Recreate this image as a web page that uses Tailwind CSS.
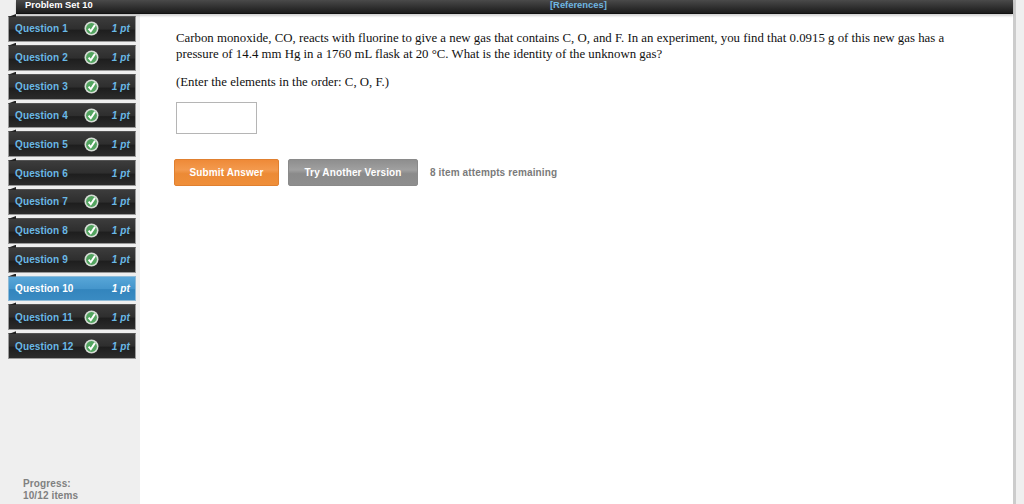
<!DOCTYPE html>
<html lang="en">
<head>
<meta charset="UTF-8">
<title>Problem Set 10</title>
<script src="https://cdn.jsdelivr.net/npm/@tailwindcss/browser@4"></script>
</head>
<body class="bg-white font-['Liberation_Sans',Arial,sans-serif] tracking-[0.12px]">
<div class="h-screen flex flex-col overflow-hidden">

  <!-- Top bar -->
  <div class="flex h-[14px] shrink-0">
    <div class="w-[16px] bg-[#efefef]"></div>
    <div class="w-[997px] flex items-start bg-gradient-to-b from-[#4a4a4a] to-[#1c1c1c] border-b border-[#111] shadow-[0_2px_2px_rgba(0,0,0,0.18)] relative">
      <span class="ml-[9px] text-[9.4px] leading-[9px] font-bold tracking-normal text-white w-[525px]">Problem Set 10</span>
      <a class="text-[9.4px] leading-[9px] font-bold tracking-normal text-[#6fb7e0]">[References]</a>
    </div>
    <div class="flex-1 border-l-[3px] border-[#ccc] bg-[#efefef]"></div>
  </div>

  <div class="flex flex-1 min-h-0">
    <!-- Sidebar -->
    <aside class="w-[140px] shrink-0 bg-[#efefef] flex flex-col pt-[2px] pl-[8px] pr-[4px]">
      <div class="relative h-[25.85px] mb-[3px] flex items-center pl-[7px] pr-[5px] border border-[#9a9a9a] border-t-[#555] bg-[linear-gradient(#3c3c3c,#2e2e2e_50%,#1e1e1e_55%,#2b2b2b)]">
        <span class="absolute -left-px -top-[3px] w-[8px] h-[3px] bg-[#222] [clip-path:polygon(0_100%,100%_0,100%_100%)]"></span>
        <span class="w-[69px] -ml-px text-[10px] font-bold text-[#6ab9e6]">Question 1</span>
        <svg class="w-[15px] h-[15px]" viewBox="0 0 15 15"><circle cx="7.5" cy="7.5" r="7" fill="#d5dcd5"/><circle cx="7.5" cy="7.5" r="5.4" fill="#52a45f"/><path d="M4.6 7.6 6.8 10.2 11 3.9" fill="none" stroke="#fff" stroke-width="1.9"/></svg>
        <span class="ml-auto text-[10px] font-bold italic text-[#6ab9e6]">1 pt</span>
      </div>
      <div class="relative h-[25.85px] mb-[3px] flex items-center pl-[7px] pr-[5px] border border-[#9a9a9a] border-t-[#555] bg-[linear-gradient(#3c3c3c,#2e2e2e_50%,#1e1e1e_55%,#2b2b2b)]">
        <span class="absolute -left-px -top-[3px] w-[8px] h-[3px] bg-[#222] [clip-path:polygon(0_100%,100%_0,100%_100%)]"></span>
        <span class="w-[69px] -ml-px text-[10px] font-bold text-[#6ab9e6]">Question 2</span>
        <svg class="w-[15px] h-[15px]" viewBox="0 0 15 15"><circle cx="7.5" cy="7.5" r="7" fill="#d5dcd5"/><circle cx="7.5" cy="7.5" r="5.4" fill="#52a45f"/><path d="M4.6 7.6 6.8 10.2 11 3.9" fill="none" stroke="#fff" stroke-width="1.9"/></svg>
        <span class="ml-auto text-[10px] font-bold italic text-[#6ab9e6]">1 pt</span>
      </div>
      <div class="relative h-[25.85px] mb-[3px] flex items-center pl-[7px] pr-[5px] border border-[#9a9a9a] border-t-[#555] bg-[linear-gradient(#3c3c3c,#2e2e2e_50%,#1e1e1e_55%,#2b2b2b)]">
        <span class="absolute -left-px -top-[3px] w-[8px] h-[3px] bg-[#222] [clip-path:polygon(0_100%,100%_0,100%_100%)]"></span>
        <span class="w-[69px] -ml-px text-[10px] font-bold text-[#6ab9e6]">Question 3</span>
        <svg class="w-[15px] h-[15px]" viewBox="0 0 15 15"><circle cx="7.5" cy="7.5" r="7" fill="#d5dcd5"/><circle cx="7.5" cy="7.5" r="5.4" fill="#52a45f"/><path d="M4.6 7.6 6.8 10.2 11 3.9" fill="none" stroke="#fff" stroke-width="1.9"/></svg>
        <span class="ml-auto text-[10px] font-bold italic text-[#6ab9e6]">1 pt</span>
      </div>
      <div class="relative h-[25.85px] mb-[3px] flex items-center pl-[7px] pr-[5px] border border-[#9a9a9a] border-t-[#555] bg-[linear-gradient(#3c3c3c,#2e2e2e_50%,#1e1e1e_55%,#2b2b2b)]">
        <span class="absolute -left-px -top-[3px] w-[8px] h-[3px] bg-[#222] [clip-path:polygon(0_100%,100%_0,100%_100%)]"></span>
        <span class="w-[69px] -ml-px text-[10px] font-bold text-[#6ab9e6]">Question 4</span>
        <svg class="w-[15px] h-[15px]" viewBox="0 0 15 15"><circle cx="7.5" cy="7.5" r="7" fill="#d5dcd5"/><circle cx="7.5" cy="7.5" r="5.4" fill="#52a45f"/><path d="M4.6 7.6 6.8 10.2 11 3.9" fill="none" stroke="#fff" stroke-width="1.9"/></svg>
        <span class="ml-auto text-[10px] font-bold italic text-[#6ab9e6]">1 pt</span>
      </div>
      <div class="relative h-[25.85px] mb-[3px] flex items-center pl-[7px] pr-[5px] border border-[#9a9a9a] border-t-[#555] bg-[linear-gradient(#3c3c3c,#2e2e2e_50%,#1e1e1e_55%,#2b2b2b)]">
        <span class="absolute -left-px -top-[3px] w-[8px] h-[3px] bg-[#222] [clip-path:polygon(0_100%,100%_0,100%_100%)]"></span>
        <span class="w-[69px] -ml-px text-[10px] font-bold text-[#6ab9e6]">Question 5</span>
        <svg class="w-[15px] h-[15px]" viewBox="0 0 15 15"><circle cx="7.5" cy="7.5" r="7" fill="#d5dcd5"/><circle cx="7.5" cy="7.5" r="5.4" fill="#52a45f"/><path d="M4.6 7.6 6.8 10.2 11 3.9" fill="none" stroke="#fff" stroke-width="1.9"/></svg>
        <span class="ml-auto text-[10px] font-bold italic text-[#6ab9e6]">1 pt</span>
      </div>
      <div class="relative h-[25.85px] mb-[3px] flex items-center pl-[7px] pr-[5px] border border-[#9a9a9a] border-t-[#555] bg-[linear-gradient(#3c3c3c,#2e2e2e_50%,#1e1e1e_55%,#2b2b2b)]">
        <span class="absolute -left-px -top-[3px] w-[8px] h-[3px] bg-[#222] [clip-path:polygon(0_100%,100%_0,100%_100%)]"></span>
        <span class="w-[69px] -ml-px text-[10px] font-bold text-[#6ab9e6]">Question 6</span>
        <span class="ml-auto text-[10px] font-bold italic text-[#6ab9e6]">1 pt</span>
      </div>
      <div class="relative h-[25.85px] mb-[3px] flex items-center pl-[7px] pr-[5px] border border-[#9a9a9a] border-t-[#555] bg-[linear-gradient(#3c3c3c,#2e2e2e_50%,#1e1e1e_55%,#2b2b2b)]">
        <span class="absolute -left-px -top-[3px] w-[8px] h-[3px] bg-[#222] [clip-path:polygon(0_100%,100%_0,100%_100%)]"></span>
        <span class="w-[69px] -ml-px text-[10px] font-bold text-[#6ab9e6]">Question 7</span>
        <svg class="w-[15px] h-[15px]" viewBox="0 0 15 15"><circle cx="7.5" cy="7.5" r="7" fill="#d5dcd5"/><circle cx="7.5" cy="7.5" r="5.4" fill="#52a45f"/><path d="M4.6 7.6 6.8 10.2 11 3.9" fill="none" stroke="#fff" stroke-width="1.9"/></svg>
        <span class="ml-auto text-[10px] font-bold italic text-[#6ab9e6]">1 pt</span>
      </div>
      <div class="relative h-[25.85px] mb-[3px] flex items-center pl-[7px] pr-[5px] border border-[#9a9a9a] border-t-[#555] bg-[linear-gradient(#3c3c3c,#2e2e2e_50%,#1e1e1e_55%,#2b2b2b)]">
        <span class="absolute -left-px -top-[3px] w-[8px] h-[3px] bg-[#222] [clip-path:polygon(0_100%,100%_0,100%_100%)]"></span>
        <span class="w-[69px] -ml-px text-[10px] font-bold text-[#6ab9e6]">Question 8</span>
        <svg class="w-[15px] h-[15px]" viewBox="0 0 15 15"><circle cx="7.5" cy="7.5" r="7" fill="#d5dcd5"/><circle cx="7.5" cy="7.5" r="5.4" fill="#52a45f"/><path d="M4.6 7.6 6.8 10.2 11 3.9" fill="none" stroke="#fff" stroke-width="1.9"/></svg>
        <span class="ml-auto text-[10px] font-bold italic text-[#6ab9e6]">1 pt</span>
      </div>
      <div class="relative h-[25.85px] mb-[3px] flex items-center pl-[7px] pr-[5px] border border-[#9a9a9a] border-t-[#555] bg-[linear-gradient(#3c3c3c,#2e2e2e_50%,#1e1e1e_55%,#2b2b2b)]">
        <span class="absolute -left-px -top-[3px] w-[8px] h-[3px] bg-[#222] [clip-path:polygon(0_100%,100%_0,100%_100%)]"></span>
        <span class="w-[69px] -ml-px text-[10px] font-bold text-[#6ab9e6]">Question 9</span>
        <svg class="w-[15px] h-[15px]" viewBox="0 0 15 15"><circle cx="7.5" cy="7.5" r="7" fill="#d5dcd5"/><circle cx="7.5" cy="7.5" r="5.4" fill="#52a45f"/><path d="M4.6 7.6 6.8 10.2 11 3.9" fill="none" stroke="#fff" stroke-width="1.9"/></svg>
        <span class="ml-auto text-[10px] font-bold italic text-[#6ab9e6]">1 pt</span>
      </div>
      <div class="relative h-[25.85px] mb-[3px] flex items-center pl-[7px] pr-[5px] border border-[#8fbbd8] bg-[linear-gradient(#58a6d8,#4596cc_50%,#3385bd_55%,#3a8bc2)]">
        <span class="absolute -left-px -top-[3px] w-[8px] h-[3px] bg-[#222] [clip-path:polygon(0_100%,100%_0,100%_100%)]"></span>
        <span class="w-[69px] -ml-px text-[10px] font-bold text-white">Question 10</span>
        <span class="ml-auto text-[10px] font-bold italic text-white">1 pt</span>
      </div>
      <div class="relative h-[25.85px] mb-[3px] flex items-center pl-[7px] pr-[5px] border border-[#9a9a9a] border-t-[#555] bg-[linear-gradient(#3c3c3c,#2e2e2e_50%,#1e1e1e_55%,#2b2b2b)]">
        <span class="absolute -left-px -top-[3px] w-[8px] h-[3px] bg-[#222] [clip-path:polygon(0_100%,100%_0,100%_100%)]"></span>
        <span class="w-[69px] -ml-px text-[10px] font-bold text-[#6ab9e6]">Question 11</span>
        <svg class="w-[15px] h-[15px]" viewBox="0 0 15 15"><circle cx="7.5" cy="7.5" r="7" fill="#d5dcd5"/><circle cx="7.5" cy="7.5" r="5.4" fill="#52a45f"/><path d="M4.6 7.6 6.8 10.2 11 3.9" fill="none" stroke="#fff" stroke-width="1.9"/></svg>
        <span class="ml-auto text-[10px] font-bold italic text-[#6ab9e6]">1 pt</span>
      </div>
      <div class="relative h-[25.85px] mb-[3px] flex items-center pl-[7px] pr-[5px] border border-[#9a9a9a] border-t-[#555] bg-[linear-gradient(#3c3c3c,#2e2e2e_50%,#1e1e1e_55%,#2b2b2b)]">
        <span class="absolute -left-px -top-[3px] w-[8px] h-[3px] bg-[#222] [clip-path:polygon(0_100%,100%_0,100%_100%)]"></span>
        <span class="w-[69px] -ml-px text-[10px] font-bold text-[#6ab9e6]">Question 12</span>
        <svg class="w-[15px] h-[15px]" viewBox="0 0 15 15"><circle cx="7.5" cy="7.5" r="7" fill="#d5dcd5"/><circle cx="7.5" cy="7.5" r="5.4" fill="#52a45f"/><path d="M4.6 7.6 6.8 10.2 11 3.9" fill="none" stroke="#fff" stroke-width="1.9"/></svg>
        <span class="ml-auto text-[10px] font-bold italic text-[#6ab9e6]">1 pt</span>
      </div>

      <div class="mt-auto ml-[15px] mb-[2px] text-[10px] leading-[12px] font-bold text-[#808080]">
        <p>Progress:</p>
        <p>10/12 items</p>
      </div>
    </aside>

    <!-- Question -->
    <main class="flex-1 pl-[36px] pt-[16px] font-['Liberation_Serif','Times_New_Roman',serif] tracking-normal text-[12.84px] leading-[16px] text-[#111]">
      <p class="w-[790px]">Carbon monoxide, CO, reacts with fluorine to give a new gas that contains C, O, and F. In an experiment, you find that 0.0915 g of this new gas has a pressure of 14.4 mm Hg in a 1760 mL flask at 20 °C. What is the identity of the unknown gas?</p>
      <p class="mt-[12px]">(Enter the elements in the order: C, O, F.)</p>
      <input type="text" class="block mt-[12px] w-[81px] h-[32px] bg-white border border-[#b5b5b5]">
      <div class="flex items-center mt-[25px] -ml-[2px] font-['Liberation_Sans',Arial,sans-serif] tracking-[0.13px]">
        <button class="w-[105px] h-[27px] pt-px rounded-[2px] bg-[linear-gradient(#ee8a38,#f39a4e_40%,#ec8a35_55%,#ef8f3a)] border border-[#e08030] text-[10px] font-bold text-white">Submit Answer</button>
        <button class="w-[130px] h-[27px] pt-px ml-[9px] rounded-[2px] bg-[linear-gradient(#8e8e8e,#a0a0a0_40%,#8a8a8a_55%,#8e8e8e)] border border-[#8a8a8a] text-[10px] font-bold text-white">Try Another Version</button>
        <span class="ml-[12px] pt-px text-[10px] font-bold text-[#7a7a7a]">8 item attempts remaining</span>
      </div>
    </main>

    <div class="w-[11px] shrink-0 border-l-[3px] border-[#ccc] bg-[#efefef]"></div>
  </div>
</div>
</body>
</html>
